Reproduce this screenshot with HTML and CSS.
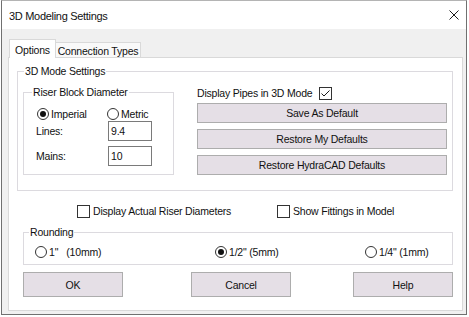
FILE: index.html
```html
<!DOCTYPE html>
<html lang="en">
<head>
    <meta charset="UTF-8">
    <title>3D Modeling Settings</title>
    <link rel="stylesheet" href="styles.css">
</head>
<body>
    <div class="dialog">
        <div class="titlebar">
            <span class="title">3D Modeling Settings</span>
            <svg class="close" width="10" height="10" viewBox="0 0 10 10">
                <path d="M0.5 0.5L9.5 9.5M9.5 0.5L0.5 9.5" stroke="#1a1a1a" stroke-width="1" fill="none"/>
            </svg>
        </div>
        <div class="client">
            <div class="tabs">
                <div class="tab active">Options</div>
                <div class="tab">Connection Types</div>
            </div>
            <div class="tab-panel">
                <fieldset class="group mode-group">
                    <legend>3D Mode Settings</legend>
                    <div class="mode-body">
                        <fieldset class="group riser-group">
                            <legend>Riser Block Diameter</legend>
                            <div class="radio-row">
                                <label class="radio checked"><span class="dot"></span>Imperial</label>
                                <label class="radio"><span class="dot"></span>Metric</label>
                            </div>
                            <div class="field-row">
                                <span class="field-label">Lines:</span>
                                <span class="textbox">9.4</span>
                            </div>
                            <div class="field-row">
                                <span class="field-label">Mains:</span>
                                <span class="textbox">10</span>
                            </div>
                        </fieldset>
                        <div class="mode-actions">
                            <label class="check-row">Display Pipes in 3D Mode
                                <span class="checkbox checked">
                                    <svg width="11" height="11" viewBox="0 0 11 11"><path d="M1.5 5.5L4 8L9.5 2.5" stroke="#1a1a1a" stroke-width="1" fill="none"/></svg>
                                </span>
                            </label>
                            <button class="btn">Save As Default</button>
                            <button class="btn">Restore My Defaults</button>
                            <button class="btn">Restore HydraCAD Defaults</button>
                        </div>
                    </div>
                </fieldset>

                <div class="options-row">
                    <label class="check-option"><span class="checkbox"></span>Display Actual Riser Diameters</label>
                    <label class="check-option"><span class="checkbox"></span>Show Fittings in Model</label>
                </div>

                <fieldset class="group rounding-group">
                    <legend>Rounding</legend>
                    <div class="radio-row">
                        <label class="radio"><span class="dot"></span>1"   (10mm)</label>
                        <label class="radio checked"><span class="dot"></span>1/2" (5mm)</label>
                        <label class="radio"><span class="dot"></span>1/4" (1mm)</label>
                    </div>
                </fieldset>

                <div class="dialog-buttons">
                    <button class="btn btn-lg">OK</button>
                    <button class="btn btn-lg btn-cancel">Cancel</button>
                    <button class="btn btn-lg btn-help">Help</button>
                </div>
            </div>
        </div>
    </div>
</body>
</html>
```
FILE: styles.css
```css
* {
    box-sizing: border-box;
}
body {
    margin: 0;
    background-color: #fff;
    font-family: "Liberation Sans", Arial, sans-serif;
    font-size: 10.5px;
    letter-spacing: -0.2px;
    color: #111;
}
.dialog {
    margin-left: 1px;
    width: 466px;
    height: 315px;
    border: 1px solid #707070;
    border-top-color: #b4b4b4;
    display: flex;
    flex-direction: column;
}
.titlebar {
    height: 28px;
    background-color: #fff;
    display: flex;
    align-items: center;
    justify-content: space-between;
    padding: 0 7px;
}
.title {
    font-size: 11px;
    letter-spacing: -0.3px;
    padding-top: 2px;
}
.client {
    flex: 1;
    background-color: #f0f0f0;
    padding: 10px 3px 3px 6px;
    display: flex;
    flex-direction: column;
}
.tabs {
    display: flex;
    align-items: flex-end;
    padding-left: 1px;
    margin-bottom: -1px;
}
.tab {
    height: 16px;
    width: 85px;
    border: 1px solid #d9d9d9;
    border-bottom: 0;
    background-color: #f9f9f9;
    display: flex;
    align-items: center;
    justify-content: center;
    padding-top: 1px;
}
.tab.active {
    width: 47px;
    height: 19px;
    background-color: #fff;
    position: relative;
    z-index: 1;
}
.tab + .tab {
    border-left: 0;
}
.tab-panel {
    flex: 1;
    background-color: #fff;
    border: 1px solid #d9d9d9;
    padding: 0 9px 0 8px;
}

/* group boxes */
fieldset.group {
    margin: 0;
    padding: 0;
    min-width: 0;
    border: 1px solid #dcdadf;
}
fieldset.group legend {
    padding: 0 1px;
    margin-left: 6px;
    line-height: 12px;
}
fieldset.mode-group {
    margin-top: 7px;
}
.mode-body {
    display: flex;
    align-items: flex-start;
    padding: 9px 5px 15px 5px;
}
fieldset.riser-group {
    width: 151px;
    padding: 9px 0 8px 12px;
}
fieldset.riser-group legend {
    margin-left: -4px;
}
.radio-row {
    display: flex;
    align-items: center;
    height: 13px;
}
.radio {
    display: flex;
    align-items: center;
    white-space: pre;
}
.riser-group .radio:first-child {
    width: 70px;
    margin-left: 1px;
}
.dot {
    flex: none;
    width: 12px;
    height: 12px;
    border: 1px solid #333;
    border-radius: 50%;
    background-color: #fff;
    margin-right: 2px;
    display: flex;
    align-items: center;
    justify-content: center;
}
.radio.checked .dot::after {
    content: "";
    width: 6px;
    height: 6px;
    border-radius: 50%;
    background-color: #111;
}
.field-row {
    display: flex;
    align-items: center;
    margin-top: 1px;
}
.field-row + .field-row {
    margin-top: 5px;
}
.field-label {
    width: 72px;
}
.textbox {
    width: 44px;
    height: 20px;
    border: 1px solid #7a7a7a;
    background-color: #fff;
    padding-left: 2px;
    display: flex;
    align-items: center;
}
.mode-actions {
    margin-left: auto;
    width: 250px;
    display: flex;
    flex-direction: column;
}
.check-row {
    display: flex;
    align-items: center;
    height: 14px;
}
.check-row .checkbox {
    margin-left: 7px;
}
.checkbox {
    flex: none;
    width: 13px;
    height: 13px;
    border: 1px solid #333;
    background-color: #fff;
    display: flex;
    align-items: center;
    justify-content: center;
}
.btn {
    height: 20px;
    margin-top: 6px;
    padding: 0;
    border: 1px solid #adadad;
    background-color: #e5dfe6;
    font: inherit;
    letter-spacing: inherit;
    color: inherit;
}
.mode-actions .btn:first-of-type {
    margin-top: 3px;
}
.options-row {
    display: flex;
    align-items: center;
    height: 14px;
    margin: 13px 0 0 60px;
}
.check-option {
    display: flex;
    align-items: center;
}
.check-option:first-child {
    width: 200px;
}
.check-option .checkbox {
    margin-right: 3px;
}
fieldset.rounding-group {
    margin: 8px 0 0 6px;
    padding: 7px 0 6px 11px;
}
fieldset.rounding-group legend {
    margin-left: -6px;
}
.rounding-group .radio:nth-child(1) {
    width: 180px;
}
.rounding-group .radio:nth-child(2) {
    width: 150px;
}
.dialog-buttons {
    display: flex;
    margin: 7px 0 0 6px;
}
.btn-lg {
    width: 100px;
    height: 25px;
    margin-top: 0;
}
.btn-cancel {
    margin-left: 68px;
}
.btn-help {
    margin-left: auto;
}
```
